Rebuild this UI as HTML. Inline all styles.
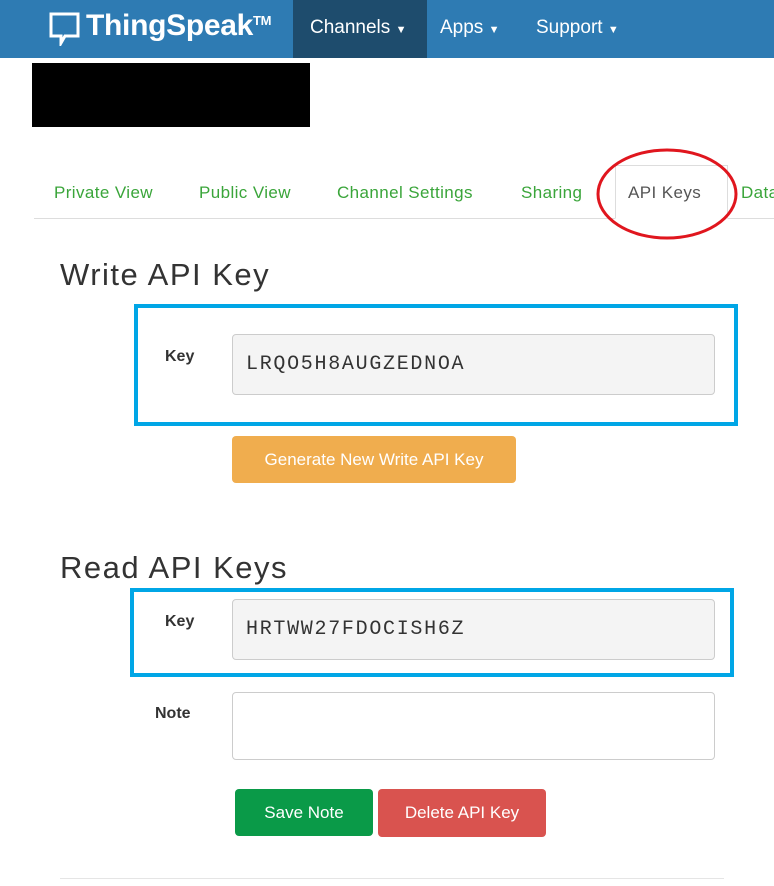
<!DOCTYPE html>
<html><head><meta charset="utf-8"><style>
*{box-sizing:border-box;margin:0;padding:0}
body{width:774px;height:886px;overflow:hidden;background:#fff;font-family:"Liberation Sans",sans-serif;position:relative}
.a{position:absolute}
.nav{left:0;top:0;width:774px;height:58px;background:#2e7bb3}
.navt{color:#fff;font-size:19px;top:17px}
.tab{top:183px;font-size:17px;color:#3aa53a;letter-spacing:0.4px}
.inp{background:#f4f4f4;border:1px solid #ccc;border-radius:4px;font-family:"Liberation Mono",monospace;font-size:20px;letter-spacing:1.7px;color:#333;padding-left:13px;display:flex;align-items:center}
.lbl{font-weight:bold;font-size:16px;color:#333}
.btn{color:#fff;font-size:17px;border-radius:4px;display:flex;align-items:center;justify-content:center}
.h{font-size:31px;color:#333;left:60px;letter-spacing:1.5px}
</style></head><body>
<div class="a nav"></div>
<div class="a" style="left:293px;top:0;width:134px;height:58px;background:#1e4c6d"></div>
<svg class="a" style="left:49px;top:12px" width="32" height="34" viewBox="0 0 32 34"><path d="M2 2H29V24H16L12 31V24H2Z" fill="none" stroke="#fff" stroke-width="3"/></svg>
<div class="a" style="left:86px;top:9px;color:#fff;font-size:30px;font-weight:bold;letter-spacing:-0.3px">ThingSpeak<span style="font-size:13px;vertical-align:top;position:relative;top:4px">TM</span></div>
<div class="a navt" style="left:310px">Channels <span style="font-size:11px">▼</span></div>
<div class="a navt" style="left:440px">Apps <span style="font-size:11px">▼</span></div>
<div class="a navt" style="left:536px">Support <span style="font-size:11px">▼</span></div>
<div class="a" style="left:32px;top:63px;width:278px;height:64px;background:#000"></div>
<div class="a" style="left:34px;top:218px;width:740px;height:1px;background:#ddd"></div>
<div class="a" style="left:615px;top:165px;width:113px;height:54px;border:1px solid #ddd;border-bottom:1px solid #fff;background:#fff"></div>
<div class="a tab" style="left:54px">Private View</div>
<div class="a tab" style="left:199px">Public View</div>
<div class="a tab" style="left:337px">Channel Settings</div>
<div class="a tab" style="left:521px">Sharing</div>
<div class="a tab" style="left:628px;color:#555">API Keys</div>
<div class="a tab" style="left:741px">Data</div>
<svg class="a" style="left:594px;top:146px" width="146" height="96"><ellipse cx="73" cy="48" rx="69" ry="44" fill="none" stroke="#e0161e" stroke-width="3"/></svg>
<div class="a h" style="top:257px">Write API Key</div>
<div class="a" style="left:134px;top:304px;width:604px;height:122px;border:4px solid #00a6e6"></div>
<div class="a lbl" style="left:165px;top:348px">Key</div>
<div class="a inp" style="left:232px;top:334px;width:483px;height:61px">LRQO5H8AUGZEDNOA</div>
<div class="a btn" style="left:232px;top:436px;width:284px;height:47px;background:#f0ad4e">Generate New Write API Key</div>
<div class="a h" style="top:550px">Read API Keys</div>
<div class="a" style="left:130px;top:588px;width:604px;height:89px;border:4px solid #00a6e6"></div>
<div class="a lbl" style="left:165px;top:613px">Key</div>
<div class="a inp" style="left:232px;top:599px;width:483px;height:61px">HRTWW27FDOCISH6Z</div>
<div class="a lbl" style="left:155px;top:705px">Note</div>
<div class="a" style="left:232px;top:692px;width:483px;height:68px;border:1px solid #ccc;border-radius:4px"></div>
<div class="a btn" style="left:235px;top:789px;width:138px;height:47px;background:#0a9a48">Save Note</div>
<div class="a btn" style="left:378px;top:789px;width:168px;height:48px;background:#d9534f">Delete API Key</div>
<div class="a" style="left:60px;top:878px;width:664px;height:1px;background:#e5e5e5"></div>
</body></html>
